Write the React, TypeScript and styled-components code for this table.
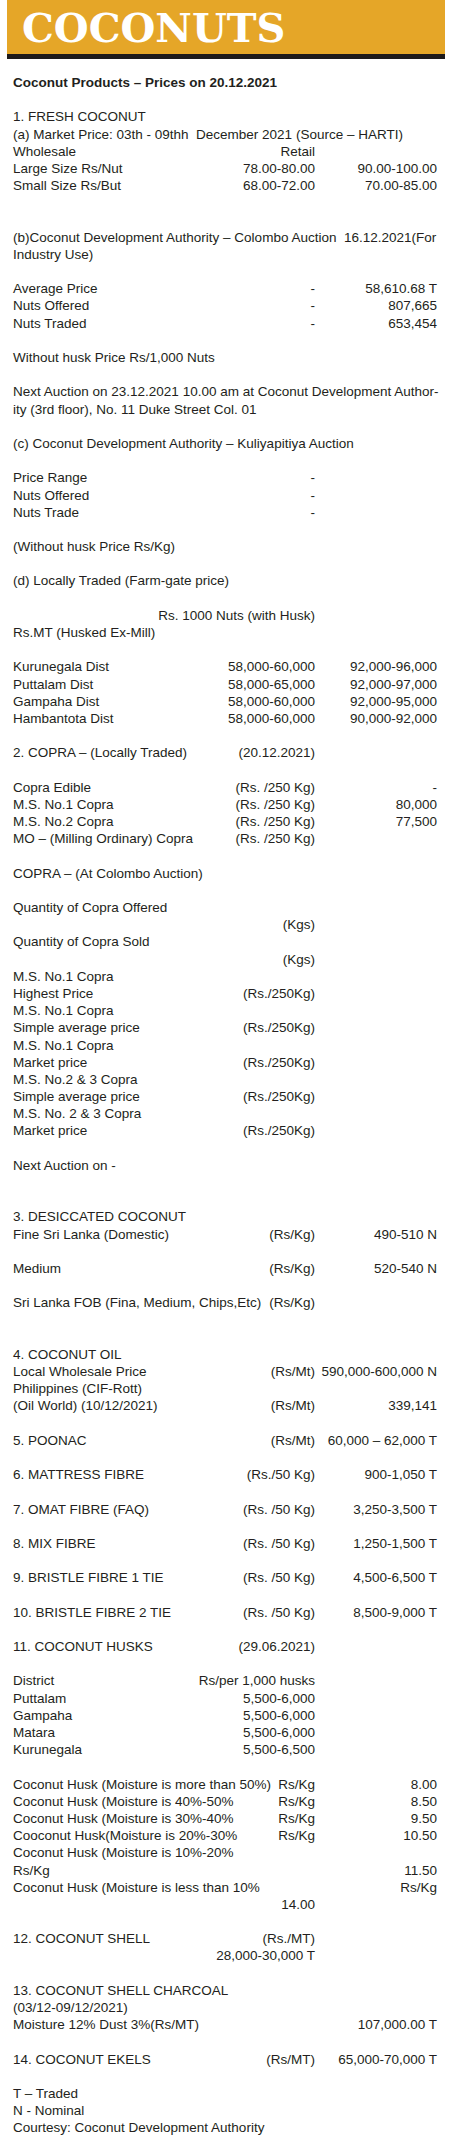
import React from 'react';
import styled, { createGlobalStyle } from 'styled-components';

type PriceRow = {
  l?: string;
  m?: string;
  r?: string;
};

// null = an empty line in the column
type Entry = PriceRow | null;

const GlobalStyle = createGlobalStyle`
  html, body {
    margin: 0;
    padding: 0;
    background: #ffffff;
  }
  body {
    font-family: "Liberation Sans", Arial, Helvetica, sans-serif;
    color: #231f20;
  }
`;

const Page = styled.div`
  width: 450px;
  min-height: 2146px;
  box-sizing: border-box;
  padding-bottom: 8px;
`;

const Masthead = styled.header`
  margin: 0 5px 0 7px;
  height: 59px;
  box-sizing: border-box;
  padding: 1px 0 0 15px;
  background: #e5a628;
  border-bottom: 5px solid #1d1a1a;
`;

const Title = styled.h1`
  margin: 0;
  font-family: "DejaVu Serif", "Liberation Serif", serif;
  font-weight: 700;
  font-size: 40px;
  line-height: 54px;
  letter-spacing: 0px;
  color: #ffffff;
`;

const Sheet = styled.main`
  padding: 15px 13px 0 13px;
  font-size: 13.5px;
  line-height: 17.2px;
`;

const Heading = styled.h2`
  margin: 0 0 17.2px 0;
  font-size: 13.5px;
  line-height: 17.2px;
  font-weight: 700;
`;

const Line = styled.div`
  display: grid;
  grid-template-columns: minmax(0, 1fr) auto 122px;
  height: 17.2px;
  white-space: pre;
`;

const Label = styled.span<{ $span: boolean }>`
  grid-column: ${(p) => (p.$span ? '1 / -1' : '1')};
`;

const Mid = styled.span`
  grid-column: 2;
  text-align: right;
`;

const Right = styled.span`
  grid-column: 3;
  text-align: right;
`;

const Blank = styled.div`
  height: 17.2px;
`;

const rows: Entry[] = [
  { l: '1. FRESH COCONUT' },
  { l: '(a) Market Price: 03th - 09thh  December 2021 (Source – HARTI)' },
  { l: 'Wholesale', m: 'Retail' },
  { l: 'Large Size Rs/Nut', m: '78.00-80.00', r: '90.00-100.00' },
  { l: 'Small Size Rs/But', m: '68.00-72.00', r: '70.00-85.00' },
  null,
  null,
  { l: '(b)Coconut Development Authority – Colombo Auction  16.12.2021(For' },
  { l: 'Industry Use)' },
  null,
  { l: 'Average Price', m: '-', r: '58,610.68 T' },
  { l: 'Nuts Offered', m: '-', r: '807,665' },
  { l: 'Nuts Traded', m: '-', r: '653,454' },
  null,
  { l: 'Without husk Price Rs/1,000 Nuts' },
  null,
  { l: 'Next Auction on 23.12.2021 10.00 am at Coconut Development Author-' },
  { l: 'ity (3rd floor), No. 11 Duke Street Col. 01' },
  null,
  { l: '(c) Coconut Development Authority – Kuliyapitiya Auction' },
  null,
  { l: 'Price Range', m: '-' },
  { l: 'Nuts Offered', m: '-' },
  { l: 'Nuts Trade', m: '-' },
  null,
  { l: '(Without husk Price Rs/Kg)' },
  null,
  { l: '(d) Locally Traded (Farm-gate price)' },
  null,
  { m: 'Rs. 1000 Nuts (with Husk)' },
  { l: 'Rs.MT (Husked Ex-Mill)' },
  null,
  { l: 'Kurunegala Dist', m: '58,000-60,000', r: '92,000-96,000' },
  { l: 'Puttalam Dist', m: '58,000-65,000', r: '92,000-97,000' },
  { l: 'Gampaha Dist', m: '58,000-60,000', r: '92,000-95,000' },
  { l: 'Hambantota Dist', m: '58,000-60,000', r: '90,000-92,000' },
  null,
  { l: '2. COPRA – (Locally Traded)', m: '(20.12.2021)' },
  null,
  { l: 'Copra Edible', m: '(Rs. /250 Kg)', r: '-' },
  { l: 'M.S. No.1 Copra', m: '(Rs. /250 Kg)', r: '80,000' },
  { l: 'M.S. No.2 Copra', m: '(Rs. /250 Kg)', r: '77,500' },
  { l: 'MO – (Milling Ordinary) Copra', m: '(Rs. /250 Kg)' },
  null,
  { l: 'COPRA – (At Colombo Auction)' },
  null,
  { l: 'Quantity of Copra Offered' },
  { m: '(Kgs)' },
  { l: 'Quantity of Copra Sold' },
  { m: '(Kgs)' },
  { l: 'M.S. No.1 Copra' },
  { l: 'Highest Price', m: '(Rs./250Kg)' },
  { l: 'M.S. No.1 Copra' },
  { l: 'Simple average price', m: '(Rs./250Kg)' },
  { l: 'M.S. No.1 Copra' },
  { l: 'Market price', m: '(Rs./250Kg)' },
  { l: 'M.S. No.2 & 3 Copra' },
  { l: 'Simple average price', m: '(Rs./250Kg)' },
  { l: 'M.S. No. 2 & 3 Copra' },
  { l: 'Market price', m: '(Rs./250Kg)' },
  null,
  { l: 'Next Auction on -' },
  null,
  null,
  { l: '3. DESICCATED COCONUT' },
  { l: 'Fine Sri Lanka (Domestic)', m: '(Rs/Kg)', r: '490-510 N' },
  null,
  { l: 'Medium', m: '(Rs/Kg)', r: '520-540 N' },
  null,
  { l: 'Sri Lanka FOB (Fina, Medium, Chips,Etc)', m: '(Rs/Kg)' },
  null,
  null,
  { l: '4. COCONUT OIL' },
  { l: 'Local Wholesale Price', m: '(Rs/Mt)', r: '590,000-600,000 N' },
  { l: 'Philippines (CIF-Rott)' },
  { l: '(Oil World) (10/12/2021)', m: '(Rs/Mt)', r: '339,141' },
  null,
  { l: '5. POONAC', m: '(Rs/Mt)', r: '60,000 – 62,000 T' },
  null,
  { l: '6. MATTRESS FIBRE', m: '(Rs./50 Kg)', r: '900-1,050 T' },
  null,
  { l: '7. OMAT FIBRE (FAQ)', m: '(Rs. /50 Kg)', r: '3,250-3,500 T' },
  null,
  { l: '8. MIX FIBRE', m: '(Rs. /50 Kg)', r: '1,250-1,500 T' },
  null,
  { l: '9. BRISTLE FIBRE 1 TIE', m: '(Rs. /50 Kg)', r: '4,500-6,500 T' },
  null,
  { l: '10. BRISTLE FIBRE 2 TIE', m: '(Rs. /50 Kg)', r: '8,500-9,000 T' },
  null,
  { l: '11. COCONUT HUSKS', m: '(29.06.2021)' },
  null,
  { l: 'District', m: 'Rs/per 1,000 husks' },
  { l: 'Puttalam', m: '5,500-6,000' },
  { l: 'Gampaha', m: '5,500-6,000' },
  { l: 'Matara', m: '5,500-6,000' },
  { l: 'Kurunegala', m: '5,500-6,500' },
  null,
  { l: 'Coconut Husk (Moisture is more than 50%)', m: 'Rs/Kg', r: '8.00' },
  { l: 'Coconut Husk (Moisture is 40%-50%', m: 'Rs/Kg', r: '8.50' },
  { l: 'Coconut Husk (Moisture is 30%-40%', m: 'Rs/Kg', r: '9.50' },
  { l: 'Cooconut Husk(Moisture is 20%-30%', m: 'Rs/Kg', r: '10.50' },
  { l: 'Coconut Husk (Moisture is 10%-20%' },
  { l: 'Rs/Kg', r: '11.50' },
  { l: 'Coconut Husk (Moisture is less than 10%', r: 'Rs/Kg' },
  { m: '14.00' },
  null,
  { l: '12. COCONUT SHELL', m: '(Rs./MT)' },
  { m: '28,000-30,000 T' },
  null,
  { l: '13. COCONUT SHELL CHARCOAL' },
  { l: '(03/12-09/12/2021)' },
  { l: 'Moisture 12% Dust 3%(Rs/MT)', r: '107,000.00 T' },
  null,
  { l: '14. COCONUT EKELS', m: '(Rs/MT)', r: '65,000-70,000 T' },
  null,
  { l: 'T – Traded' },
  { l: 'N - Nominal' },
  { l: 'Courtesy: Coconut Development Authority' },
];

function PriceLine({ l, m, r }: PriceRow) {
  const alone = !m && !r;
  return (
    <Line>
      {l && <Label $span={alone}>{l}</Label>}
      {m && <Mid>{m}</Mid>}
      {r && <Right>{r}</Right>}
    </Line>
  );
}

export default function App() {
  return (
    <Page>
      <GlobalStyle />
      <Masthead>
        <Title>COCONUTS</Title>
      </Masthead>
      <Sheet>
        <Heading>Coconut Products – Prices on 20.12.2021</Heading>
        {rows.map((row, i) =>
          row ? <PriceLine key={i} {...row} /> : <Blank key={i} />,
        )}
      </Sheet>
    </Page>
  );
}
